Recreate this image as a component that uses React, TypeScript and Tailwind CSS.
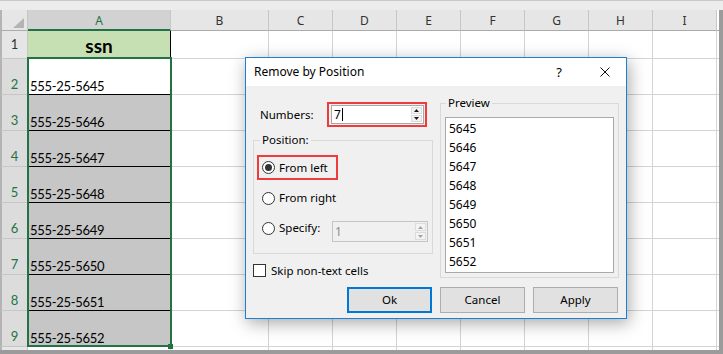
import React from 'react';

const columns = ['A', 'B', 'C', 'D', 'E', 'F', 'G', 'H', 'I'];
const ssns = [
    '555-25-5645',
    '555-25-5646',
    '555-25-5647',
    '555-25-5648',
    '555-25-5649',
    '555-25-5650',
    '555-25-5651',
    '555-25-5652',
];
const preview = ['5645', '5646', '5647', '5648', '5649', '5650', '5651', '5652'];

const Arrow = ({ down, color }: { down?: boolean; color: string }) => (
    <svg width="5" height="3" viewBox="0 0 5 3">
        <path d={down ? 'M0 0 L5 0 L2.5 3Z' : 'M0 3 L5 3 L2.5 0Z'} fill={color} />
    </svg>
);

const Spinner = ({ disabled }: { disabled?: boolean }) => {
    const color = disabled ? '#a3a3a3' : '#1a1a1a';
    return (
        <div className="flex w-[13px] flex-col gap-px p-px">
            <div className="flex flex-1 items-center justify-center border border-[#dcdcdc] bg-[#f3f3f3]">
                <Arrow color={color} />
            </div>
            <div className="flex flex-1 items-center justify-center border border-[#dcdcdc] bg-[#f3f3f3]">
                <Arrow down color={color} />
            </div>
        </div>
    );
};

const Radio = ({ checked }: { checked?: boolean }) => (
    <span className="flex h-[13px] w-[13px] shrink-0 items-center justify-center rounded-full border border-[#333] bg-white">
        {checked && <span className="h-[7px] w-[7px] rounded-full bg-[#333]" />}
    </span>
);

const Dialog = () => (
    <div className="absolute left-[245px] top-[57px] flex h-[262px] w-[382px] flex-col border border-[#1c7ed6] bg-[#f0f0f0] font-['Noto_Sans',sans-serif] text-[11.5px] leading-[16px] text-black shadow-[2px_4px_16px_rgba(0,0,0,0.35)]">
        <div className="flex h-[28px] items-center bg-white">
            <span className="flex-1 pl-[8px] text-[12px]">Remove by Position</span>
            <span className="w-[50px] text-center text-[13px]">?</span>
            <span className="flex w-[42px] justify-center">
                <svg width="10" height="10" viewBox="0 0 10 10">
                    <path d="M0.5 0.5L9.5 9.5M9.5 0.5L0.5 9.5" stroke="#111" strokeWidth="1" />
                </svg>
            </span>
        </div>
        <div className="flex flex-1 flex-col pl-[7px] pt-[9px]">
            <div className="flex gap-[7px]">
                <div className="flex w-[180px] flex-col">
                    <div className="mt-[7px] flex h-[25px] items-center">
                        <span className="ml-[7px] w-[67px]">Numbers:</span>
                        <div className="flex h-[25px] w-[100px] items-center border-2 border-[#ef3b3b] pl-[2px] pr-[1px]">
                            <div className="flex h-[19px] flex-1 border border-[#a8a8a8] bg-white">
                                <div className="flex flex-1 items-center pl-[2px] text-[12px]">
                                    <span>7</span>
                                    <span className="ml-px h-[13px] w-px bg-black" />
                                </div>
                                <Spinner />
                            </div>
                        </div>
                    </div>
                    <fieldset className="mt-[5px] h-[122px] w-[180px] border border-[#d9d9d9] p-0">
                        <legend className="ml-[6px] px-[2px]">Position:</legend>
                        <div className="ml-[3px] mt-[7px] flex h-[25px] w-[81px] items-center gap-[4px] border-2 border-[#ef3b3b] pl-[3px]">
                            <Radio checked />
                            <span>From left</span>
                        </div>
                        <div className="ml-[8px] mt-[8px] flex h-[20px] items-center gap-[4px]">
                            <Radio />
                            <span>From right</span>
                        </div>
                        <div className="ml-[8px] mt-[10px] flex h-[20px] items-start">
                            <div className="flex h-[20px] items-center gap-[4px]">
                                <Radio />
                                <span className="w-[53px]">Specify:</span>
                            </div>
                            <div className="mt-[3px] flex h-[21px] w-[96px] border border-[#c4c4c4] bg-[#f0f0f0]">
                                <span className="flex flex-1 items-center pl-[2px] text-[12px] text-[#8c8c8c]">1</span>
                                <Spinner disabled />
                            </div>
                        </div>
                    </fieldset>
                    <div className="mt-[10px] flex h-[13px] items-center gap-[5px]">
                        <span className="h-[13px] w-[13px] border border-[#333] bg-white" />
                        <span>Skip non-text cells</span>
                    </div>
                </div>
                <fieldset className="h-[183px] w-[179px] border border-[#d9d9d9] p-0">
                    <legend className="ml-[5px] px-[2px]">Preview</legend>
                    <div className="mx-[4px] mt-[6px] h-[156px] border border-[#a9a9a9] bg-white pl-[3px] pt-px text-[12px] leading-[19px]">
                        {preview.map((p) => (
                            <div key={p}>{p}</div>
                        ))}
                    </div>
                </fieldset>
            </div>
            <div className="mt-[9px] flex justify-end gap-[8px] pr-[8px]">
                <button className="h-[26px] w-[85px] border-2 border-[#0078d7] bg-[#e1e1e1]">Ok</button>
                <button className="h-[26px] w-[85px] border border-[#adadad] bg-[#e1e1e1]">Cancel</button>
                <button className="h-[26px] w-[85px] border border-[#adadad] bg-[#e1e1e1]">Apply</button>
            </div>
        </div>
    </div>
);

const App = () => (
    <div className="relative flex h-[354px] w-[723px] flex-col overflow-hidden bg-white font-['Lato',sans-serif]">
        <div className="h-[10px] border-t border-[#c8c8c8] bg-[#ececec]" />
        <div className="flex flex-1">
            <div className="flex w-[719px] flex-col">
                <div className="grid grid-cols-[28px_143px_98px_repeat(7,64px)_2px] grid-rows-[21px_28px_repeat(8,36px)_3px]">
                    {/* header row */}
                    <div className="relative border-b border-l-2 border-r border-b-[#ababab] border-l-[#b4b4b4] border-r-[#c6c6c6] bg-[#e6e6e6]">
                        <svg className="absolute left-[11px] top-[8px]" width="11" height="10" viewBox="0 0 11 10">
                            <path d="M11 0 L11 10 L0 10Z" fill="#b4b4b4" />
                        </svg>
                    </div>
                    {columns.map((c) => (
                        <div
                            key={c}
                            className={
                                c === 'A'
                                    ? 'flex items-center justify-center border-b-2 border-r border-b-[#217346] border-r-[#c6c6c6] bg-[#d2d2d2] pt-[2px] font-[\'Noto_Sans\',sans-serif] text-[12px] text-[#217346]'
                                    : 'flex items-center justify-center border-b border-r border-b-[#ababab] border-r-[#c6c6c6] bg-[#e6e6e6] pt-[1px] font-[\'Noto_Sans\',sans-serif] text-[12px] text-[#333]'
                            }
                        >
                            {c}
                        </div>
                    ))}
                    <div className="border-b border-[#ababab] bg-white" />

                    {/* row 1 */}
                    <div className="flex items-center justify-center border-b border-l-2 border-r border-b-[#c6c6c6] border-l-[#b4b4b4] border-r-[#c6c6c6] bg-[#e6e6e6] text-[13px] text-[#333]">
                        1
                    </div>
                    <div className="flex items-end justify-center border-b border-r border-b-[#d4d4d4] border-r-black bg-[#c6e0b4] pb-[2px] text-[19px] font-bold leading-[20px] text-black">
                        ssn
                    </div>
                    {columns.slice(1).map((c) => (
                        <div key={c} className="border-b border-r border-[#d4d4d4]" />
                    ))}
                    <div className="border-b border-[#d4d4d4]" />

                    {/* rows 2-9 */}
                    {ssns.map((s, i) => (
                        <React.Fragment key={s}>
                            <div className="flex items-end justify-center border-b border-l-2 border-r border-b-[#c6c6c6] border-l-[#b4b4b4] border-r-[#c6c6c6] bg-[#dcdcdc] pb-[2px] text-[13px] leading-[16px] text-[#217346]">
                                {i + 2}
                            </div>
                            <div
                                className={
                                    i === 0
                                        ? 'flex items-end border-b border-r border-b-black border-r-[#d4d4d4] bg-white pl-[2px] text-[13px] leading-[16px] tracking-[-0.3px] text-black'
                                        : 'flex items-end border-b border-r border-b-black border-r-[#d4d4d4] bg-[#c6c6c6] pl-[2px] text-[13px] leading-[16px] tracking-[-0.3px] text-black'
                                }
                            >
                                {s}
                            </div>
                            {columns.slice(1).map((c) => (
                                <div key={c} className="border-b border-r border-[#d4d4d4]" />
                            ))}
                            <div className="border-b border-[#d4d4d4]" />
                        </React.Fragment>
                    ))}

                    {/* partial row */}
                    <div className="border-l-2 border-r border-l-[#b4b4b4] border-r-[#c6c6c6] bg-[#e6e6e6]" />
                    <div className="border-r border-[#d4d4d4]" />
                    {columns.slice(1).map((c) => (
                        <div key={c} className="border-r border-[#d4d4d4]" />
                    ))}
                    <div />
                </div>
                <div className="h-[4px] bg-[#9b9b9b]" />
            </div>
            <div className="w-[4px] bg-[#9b9b9b]" />
        </div>

        {/* selection */}
        <div className="absolute left-[27px] top-[57px] h-[290px] w-[145px] border-2 border-[#217346]" />
        <div className="absolute left-[168px] top-[344px] h-[5px] w-[5px] bg-[#217346]" />

        <Dialog />
    </div>
);

export default App;
